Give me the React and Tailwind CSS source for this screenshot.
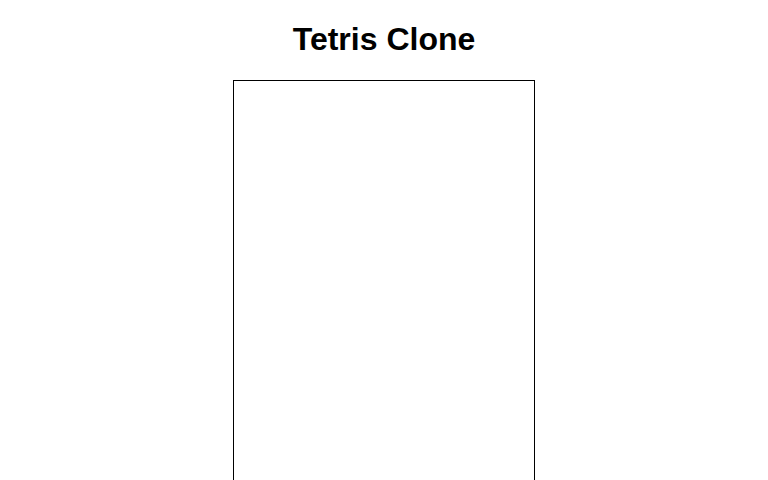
export default function App() {
  return (
    <div className="flex flex-col items-center bg-white font-['Liberation_Sans',Arial,sans-serif]">
      <h1 className="my-[21.44px] text-[32px] leading-[36.8px] font-bold text-black font-['Liberation_Sans',Arial,sans-serif]">
        Tetris Clone
      </h1>
      <div className="w-[302px] h-[602px] border border-black bg-white"></div>
    </div>
  );
}
